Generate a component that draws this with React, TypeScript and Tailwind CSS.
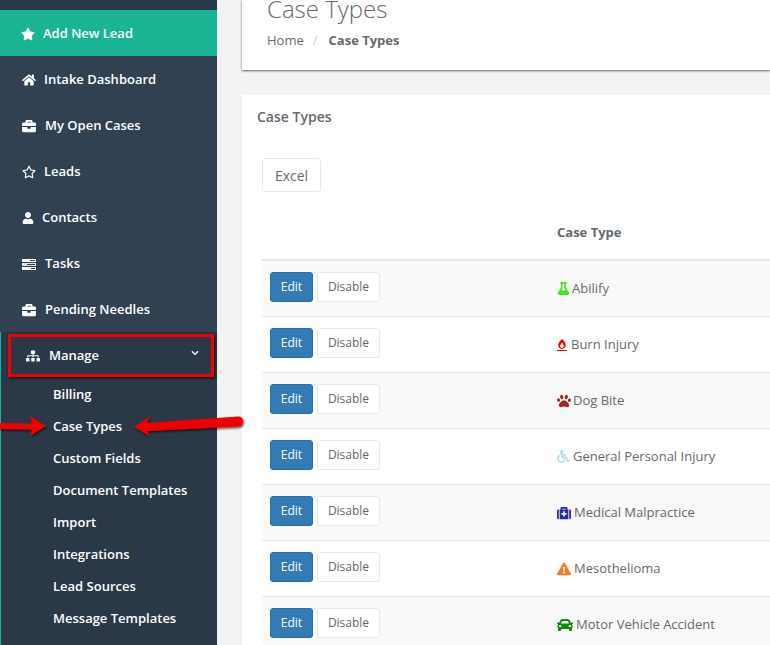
import { ReactNode } from "react"
import {
  FaStar, FaRegStar, FaHome, FaBriefcase, FaUser, FaSitemap, FaFlask, FaBurn, FaPaw,
  FaWheelchair, FaMedkit, FaExclamationTriangle, FaCar, FaChevronDown,
} from "react-icons/fa"

function TasksIcon() {
  return (
    <svg width="14" height="11" viewBox="0 0 14 11" fill="currentColor">
      <rect x="0" y="0" width="14" height="3" />
      <rect x="0" y="4" width="14" height="3" opacity="0.85" />
      <rect x="0" y="8" width="14" height="3" />
      <rect x="8" y="1" width="5" height="1" fill="#324152" />
      <rect x="5" y="5" width="8" height="1" fill="#324152" />
      <rect x="9" y="9" width="4" height="1" fill="#324152" />
    </svg>
  )
}

function BurnIcon() {
  return (
    <span className="flex flex-col items-center w-[10px] text-[#f00000]">
      <FaBurn size={10} />
      <span className="w-[10px] h-[1px] mt-[1px] bg-[#f00000]" />
    </span>
  )
}

const navItems: { label: string; icon: ReactNode; gap: string }[] = [
  { label: "Intake Dashboard", icon: <FaHome size={14} />, gap: "w-[22px]" },
  { label: "My Open Cases", icon: <FaBriefcase size={14} />, gap: "w-[23px]" },
  { label: "Leads", icon: <FaRegStar size={14} />, gap: "w-[22px]" },
  { label: "Contacts", icon: <FaUser size={12} />, gap: "w-[20px]" },
  { label: "Tasks", icon: <TasksIcon />, gap: "w-[23px]" },
  { label: "Pending Needles", icon: <FaBriefcase size={14} />, gap: "w-[23px]" },
]

const subItems = ["Billing", "Case Types", "Custom Fields", "Document Templates", "Import", "Integrations", "Lead Sources", "Message Templates"]

const rows: { name: string; icon: ReactNode; gap: string }[] = [
  { name: "Abilify", icon: <FaFlask size={13} className="text-[#44e02c]" />, gap: "w-[15px]" },
  { name: "Burn Injury", icon: <BurnIcon />, gap: "w-[14px]" },
  { name: "Dog Bite", icon: <FaPaw size={14} className="text-[#9c2a2a]" />, gap: "w-[16px]" },
  { name: "General Personal Injury", icon: <FaWheelchair size={13} className="text-[#b5dcec]" />, gap: "w-[16px]" },
  { name: "Medical Malpractice", icon: <FaMedkit size={14} className="text-[#2a2a9c]" />, gap: "w-[17px]" },
  { name: "Mesothelioma", icon: <FaExclamationTriangle size={14} className="text-[#f97a1a]" />, gap: "w-[17px]" },
  { name: "Motor Vehicle Accident", icon: <FaCar size={16} className="text-[#118a11]" />, gap: "w-[19px]" },
]

function Sidebar() {
  return (
    <aside className="w-[217px] shrink-0 h-full bg-[#324152] text-white font-semibold text-[13px]">
      <div className="h-[10px] bg-[#26384a]" />
      <div className="h-[46px] bg-[#1ab394] pl-[21px] pt-[2px] flex items-center">
        <span className="w-[22px]"><FaStar size={14} /></span>
        <span>Add New Lead</span>
      </div>
      {navItems.map((item) => (
        <div key={item.label} className="h-[46px] pl-[22px] pt-[2px] flex items-center">
          <span className={item.gap}>{item.icon}</span>
          <span>{item.label}</span>
        </div>
      ))}
      <div className="h-[313px] bg-[#2b3848] border-l border-[#1ab394]">
        <div className="h-[46px] pl-[25px] pr-[18px] pt-[2px] flex items-center">
          <span className="w-[23px]"><FaSitemap size={14} /></span>
          <span className="flex-1">Manage</span>
          <FaChevronDown size={8} className="mb-[7px]" />
        </div>
        <div className="pt-[1px] pl-[52px]">
          {subItems.map((s) => (
            <div key={s} className="h-[32px] flex items-center">{s}</div>
          ))}
        </div>
      </div>
    </aside>
  )
}

function Annotations() {
  return (
    <>
      <div className="absolute left-[8px] top-[334px] w-[206px] h-[43px] border-[3px] border-[#f00000] shadow-[1px_1px_3px_rgba(0,0,0,0.8)]" />
      <svg className="absolute left-0 top-[410px]" width="250" height="32" viewBox="0 0 250 32">
        <defs>
          <filter id="arrowShadow" x="-10%" y="-30%" width="120%" height="170%">
            <feDropShadow dx="1" dy="1.5" stdDeviation="1.2" floodColor="#000" floodOpacity="0.7" />
          </filter>
        </defs>
        <g fill="#f00000" filter="url(#arrowShadow)">
          <path d="M0 13 L32 13.5 L30 6 L46 16 L30 26 L32 19.5 L0 19 Z" />
          <path d="M134 17 L150 6.5 L147 13 L238 6.5 Q243 6.5 243 11 Q243 16 238 16.5 L147 21 L150 26 Z" />
        </g>
      </svg>
    </>
  )
}

export default function App() {
  return (
    <div className="relative flex w-[770px] h-[645px] overflow-hidden bg-[#f3f3f4] text-[#676a6c] text-[13px] font-['Open_Sans',sans-serif]">
      <Sidebar />
      <main className="flex-1 pl-[25px] min-w-0">
        <section className="h-[70px] bg-white shadow-[0_1px_2px_rgba(0,0,0,0.6)] pl-[25px] relative">
          <h1 className="absolute left-[25px] top-[-8px] text-[24px] leading-[34px] font-light whitespace-nowrap">Case Types</h1>
          <div className="absolute left-[25px] top-[31px] leading-[18px] flex whitespace-nowrap">
            <span>Home</span>
            <span className="text-[#ccc] pl-[9px] pr-[11px]">/</span>
            <b className="font-bold">Case Types</b>
          </div>
        </section>
        <section className="mt-[25px] h-[550px] bg-white">
          <div className="h-[43px] pl-[15px] flex items-center text-[14px] font-semibold">Case Types</div>
          <div className="pl-[20px]">
            <button className="mt-[20px] h-[34px] w-[59px] border border-[#e7eaec] rounded-[3px] text-[14px] bg-white">Excel</button>
            <div className="h-[69px] flex items-center pl-[295px] font-bold border-b-2 border-[#e7e7e7] box-border">
              <span className="mt-[14px]">Case Type</span>
            </div>
            {rows.map((r, i) => (
              <div key={r.name} className={`h-[56px] flex items-center border-b border-[#e7e7e7] ${i % 2 === 0 ? "bg-[#f9f9f9]" : "bg-white"}`}>
                <button className="ml-[8px] mb-[4px] w-[43px] h-[30px] rounded-[3px] bg-[#337ab7] border border-[#2e6da4] text-white text-[12px]">Edit</button>
                <button className="ml-[4px] mb-[4px] w-[63px] h-[30px] rounded-[3px] bg-white border border-[#e7eaec] text-[12px]">Disable</button>
                <div className="ml-[177px] flex items-center">
                  <span className={r.gap}>{r.icon}</span>
                  <span>{r.name}</span>
                </div>
              </div>
            ))}
          </div>
        </section>
      </main>
      <Annotations />
    </div>
  )
}
